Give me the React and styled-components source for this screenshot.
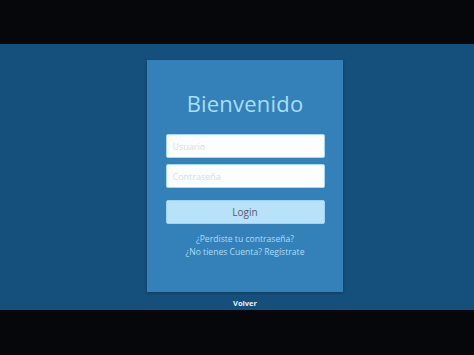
import React from 'react'
import styled, { createGlobalStyle } from 'styled-components'

const Global = createGlobalStyle`
  body {
    margin: 0;
    background: #000;
    font-family: "Open Sans", "DejaVu Sans", sans-serif;
  }
`;

const Screen = styled.div`
  width: 474px;
  height: 355px;
  display: flex;
  flex-direction: column;
  background: #040608;
`;

const Bar = styled.div`
  height: ${({ h }) => h}px;
  background: #05070a;
`;

const Stage = styled.main`
  height: 266px;
  background: #154f7b;
  display: flex;
  flex-direction: column;
  align-items: center;
  padding: 16px 0 0 16px;
  box-sizing: border-box;
`;

const Card = styled.form`
  width: 196px;
  height: 232px;
  box-sizing: border-box;
  background: #3481ba;
  display: flex;
  flex-direction: column;
  align-items: center;
  padding: 28px 18px 0;
  box-shadow: 0 1px 3px rgba(0, 0, 0, 0.25);
`;

const Title = styled.h1`
  margin: 0 0 16px;
  font-family: "Open Sans", sans-serif;
  font-weight: 400;
  font-size: 22px;
  line-height: 30px;
  color: #a9def8;
  letter-spacing: 0.2px;
`;

const Input = styled.input`
  width: 159px;
  height: 24px;
  box-sizing: border-box;
  border: 1px solid #a8d8f4;
  border-radius: 2px;
  background: #fbfdff;
  padding: 0 6px;
  margin-bottom: ${({ mb }) => mb}px;
  font-family: "Open Sans", sans-serif;
  font-size: 9px;
  outline: none;
  &::placeholder {
    color: #d6dde4;
  }
`;

const Button = styled.button`
  width: 159px;
  height: 24px;
  border: 1px solid #9fd2f1;
  border-radius: 2px;
  background: #b9e1f9;
  color: #555c63;
  font-family: "Open Sans", sans-serif;
  font-size: 10px;
  margin-bottom: 9px;
  cursor: pointer;
`;

const Link = styled.a`
  font-family: "Open Sans", sans-serif;
  font-size: 8.6px;
  line-height: 13px;
  color: #a9def8;
  text-decoration: none;
  white-space: nowrap;
`;

const Back = styled.a`
  margin-top: 6px;
  font-family: "Open Sans", sans-serif;
  font-size: 7.5px;
  font-weight: 700;
  color: #e8f2fa;
  text-decoration: none;
`;

export default function App() {
  return (
    <>
      <Global />
      <Screen>
        <Bar h={44} />
        <Stage>
          <Card onSubmit={e => e.preventDefault()}>
            <Title>Bienvenido</Title>
            <Input placeholder="Usuario" mb={6} />
            <Input type="password" placeholder="Contraseña" mb={12} />
            <Button type="submit">Login</Button>
            <Link href="#">¿Perdiste tu contraseña?</Link>
            <Link href="#">¿No tienes Cuenta? Regístrate</Link>
          </Card>
          <Back href="#">Volver</Back>
        </Stage>
        <Bar h={45} />
      </Screen>
    </>
  );
}
